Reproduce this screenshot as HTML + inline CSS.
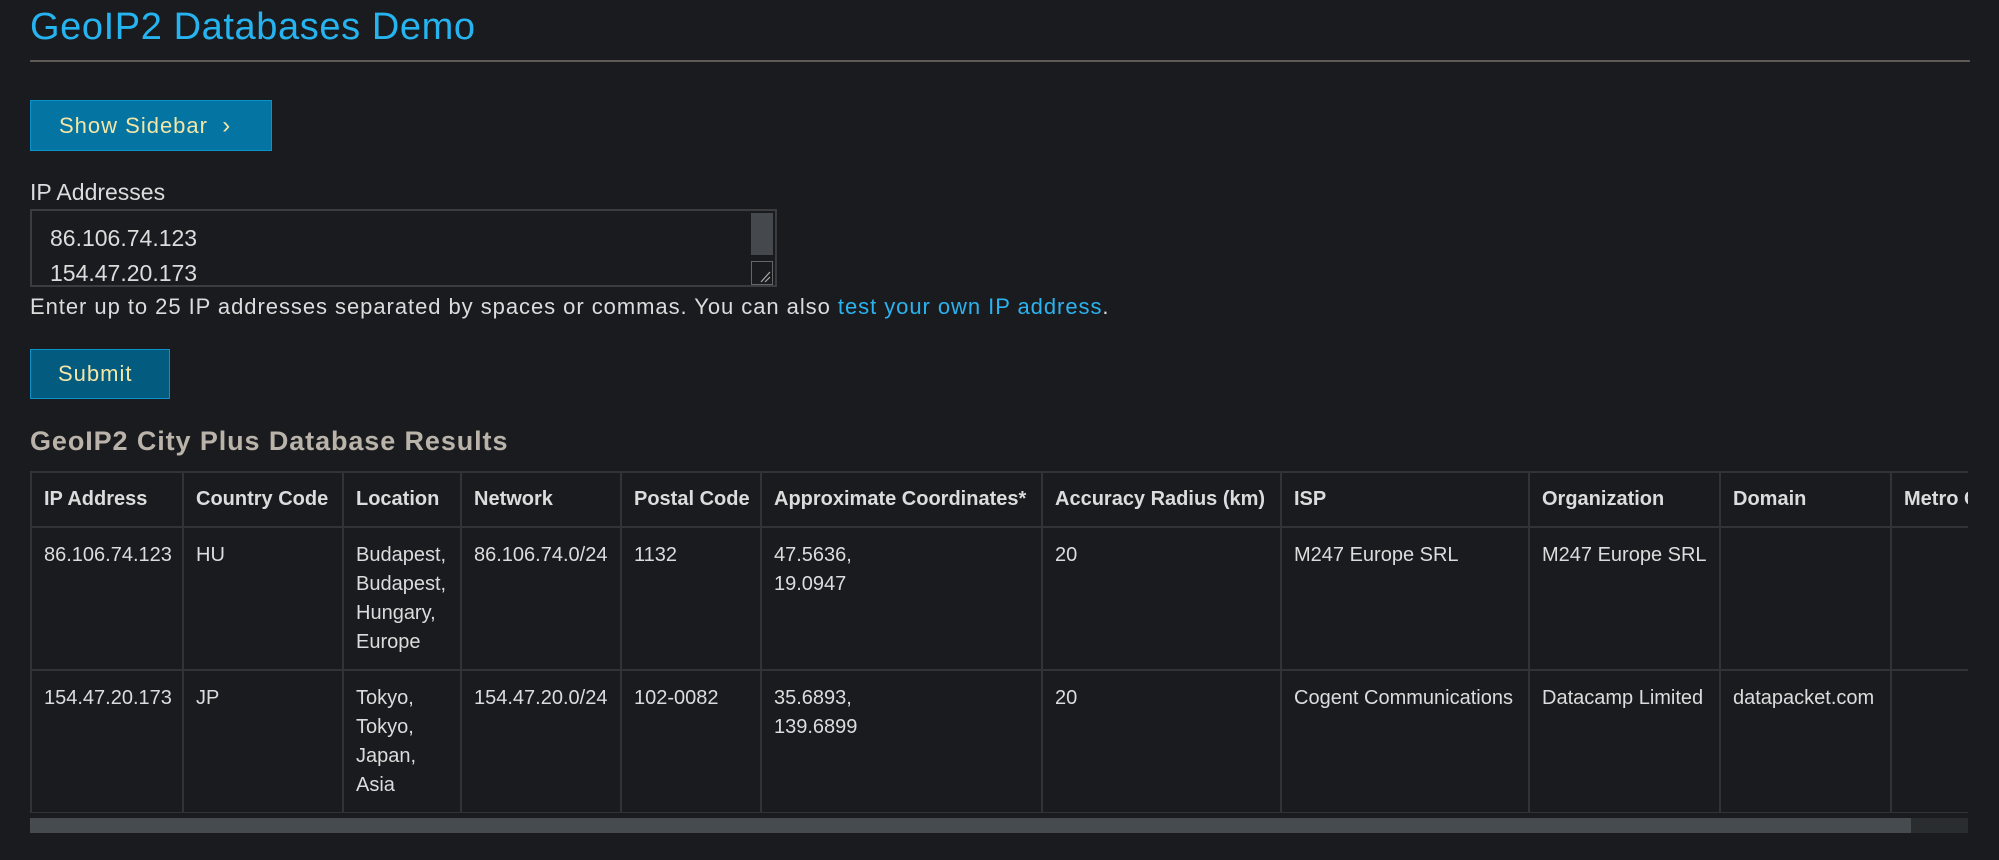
<!DOCTYPE html>
<html><head><meta charset="utf-8"><style>
*{box-sizing:border-box;margin:0;padding:0}
body{width:1999px;height:860px;overflow:hidden;background:#1a1b1e;color:#dcdcdc;font-family:"Liberation Sans",sans-serif;position:relative}
.abs{position:absolute}
h1{position:absolute;left:30px;top:6px;font-size:38px;font-weight:normal;color:#26b4f0;letter-spacing:0.6px}
.rule{position:absolute;left:30px;top:60px;width:1940px;height:2px;background:#5e5a54}
.btn{position:absolute;background:#0474a2;border:1px solid #0b93c9;color:#f3e6a6;font-size:22px;letter-spacing:1px;display:flex;align-items:center}
.lbl{left:30px;top:179px;font-size:23px}
.ta{left:30px;top:209px;width:747px;height:78px;border:2px solid #3a3c3f;background:#1a1b1e;font-size:23px;line-height:35px;padding:10px 0 0 18px;overflow:hidden}
.sb{position:absolute;right:2px;top:2px;width:22px;height:42px;background:#45494d}
.rz{position:absolute;right:2px;bottom:0;width:22px;height:24px;border:1px solid #666;background:#1a1b1e}
.help{left:30px;top:294px;font-size:22px;letter-spacing:0.95px}
.help a{color:#2bb3f0;text-decoration:none}
.h2{left:30px;top:426px;font-size:27px;font-weight:bold;color:#b9b3aa;letter-spacing:0.9px}
.wrap{position:absolute;left:30px;top:471px;width:1938px;height:342px;overflow:hidden}
table{border-collapse:collapse;table-layout:fixed;width:2100px;font-size:20px}
td,th{border:2px solid #303337;vertical-align:top;text-align:left;padding:13px 12px 12px 12px;line-height:29px;white-space:nowrap;overflow:hidden}
th{font-weight:bold;height:55px;padding-top:12px}
tbody tr{height:143px}
.scroll{position:absolute;left:30px;top:818px;width:1938px;height:15px;background:#2a2d30}
.thumb{position:absolute;left:0;top:0;width:1881px;height:15px;background:#464b50}
</style></head><body>
<h1>GeoIP2 Databases Demo</h1>
<div class="rule"></div>
<div class="btn" style="left:30px;top:100px;width:242px;height:51px;padding-left:28px">Show Sidebar&nbsp;&nbsp;<span style="font-size:24px">&#x203A;</span></div>
<div class="abs lbl">IP Addresses</div>
<div class="abs ta">86.106.74.123<br>154.47.20.173<div class="sb"></div><div class="rz"><svg width="20" height="22" style="position:absolute;left:0;top:0"><path d="M9 20 L18 10 M13 20 L18 15" stroke="#aaa" stroke-width="1.2"/></svg></div></div>
<div class="abs help">Enter up to 25 IP addresses separated by spaces or commas. You can also <a>test your own IP address</a>.</div>
<div class="btn" style="left:30px;top:349px;width:140px;height:50px;background:#045b80;padding-left:27px">Submit</div>
<div class="abs h2">GeoIP2 City Plus Database Results</div>
<div class="wrap"><table>
<colgroup><col style="width:152px"><col style="width:160px"><col style="width:118px"><col style="width:160px"><col style="width:140px"><col style="width:281px"><col style="width:239px"><col style="width:248px"><col style="width:191px"><col style="width:171px"><col style="width:240px"></colgroup>
<thead><tr><th>IP Address</th><th>Country Code</th><th>Location</th><th>Network</th><th>Postal Code</th><th>Approximate Coordinates*</th><th>Accuracy Radius (km)</th><th>ISP</th><th>Organization</th><th>Domain</th><th>Metro Code</th></tr></thead>
<tbody>
<tr><td>86.106.74.123</td><td>HU</td><td>Budapest,<br>Budapest,<br>Hungary,<br>Europe</td><td>86.106.74.0/24</td><td>1132</td><td>47.5636,<br>19.0947</td><td>20</td><td>M247 Europe SRL</td><td>M247 Europe SRL</td><td></td><td></td></tr>
<tr><td>154.47.20.173</td><td>JP</td><td>Tokyo,<br>Tokyo,<br>Japan,<br>Asia</td><td>154.47.20.0/24</td><td>102-0082</td><td>35.6893,<br>139.6899</td><td>20</td><td>Cogent Communications</td><td>Datacamp Limited</td><td>datapacket.com</td><td></td></tr>
</tbody></table></div>
<div class="scroll"><div class="thumb"></div></div>
</body></html>
